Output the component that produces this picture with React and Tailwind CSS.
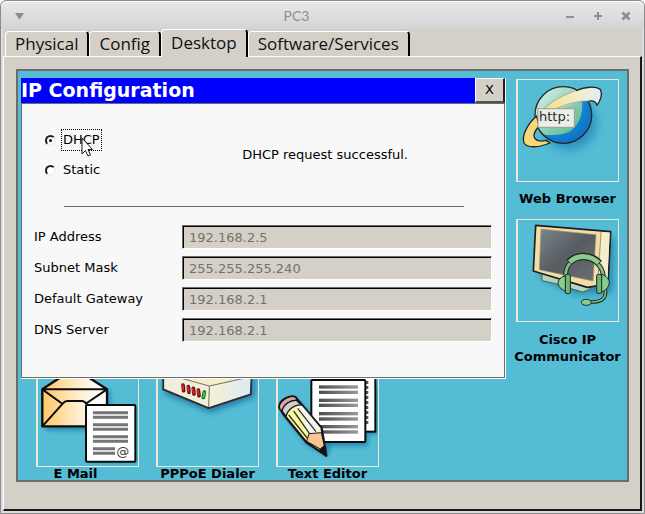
import React, { useState } from 'react';

const tabs = ['Physical', 'Config', 'Desktop', 'Software/Services'];

const GlobeIcon = () => (
  <svg viewBox="54 30 300 303" className="block w-full" aria-hidden="true">
    <defs>
      <radialGradient id="sea" cx="0.3" cy="0.25" r="0.9">
        <stop offset="0.4" stopColor="#1593dc" />
        <stop offset="1" stopColor="#0a6cc0" />
      </radialGradient>
      <linearGradient id="land" x1="0" y1="0" x2="1" y2="1">
        <stop offset="0" stopColor="#e6f4f2" />
        <stop offset="0.6" stopColor="#86ccb0" />
        <stop offset="1" stopColor="#55b48c" />
      </linearGradient>
      <linearGradient id="ribbon" x1="0" y1="0" x2="1" y2="0">
        <stop offset="0" stopColor="#f6dd80" />
        <stop offset="0.6" stopColor="#f2ecc9" />
        <stop offset="1" stopColor="#dff0f6" />
      </linearGradient>
      <filter id="soft" x="-30%" y="-30%" width="160%" height="160%">
        <feGaussianBlur stdDeviation="12" />
      </filter>
    </defs>
    <circle cx="208" cy="158" r="82" fill="#1878b0" opacity="0.6" filter="url(#soft)" />
    <circle cx="190" cy="135" r="85" fill="url(#sea)" />
    <path d="M107 152C96 88 143 50 190 50C214 50 232 58 241 72C254 110 246 158 213 182C190 196 160 196 134 194C120 186 110 170 107 152Z" fill="url(#land)" />
    <circle cx="190" cy="135" r="85" fill="none" stroke="#262626" strokeWidth="4" />
    <path d="M132 122C152 96 190 72 228 60C256 50 286 48 301 58C308 70 303 90 291 106C289 96 282 92 270 92C236 92 186 106 148 132L120 150Z" fill="url(#ribbon)" />
    <path d="M132 116C154 94 190 74 228 62" fill="none" stroke="#8d8d86" strokeWidth="2" />
    <path d="M228 62C256 50 286 48 301 58C308 70 303 90 291 106C289 96 282 92 268 93" fill="none" stroke="#262626" strokeWidth="4" strokeLinejoin="round" />
    <path d="M268 93C236 92 196 102 164 118" fill="none" stroke="#8d8d86" strokeWidth="2" />
    <path d="M110 138C84 160 64 196 72 219C82 236 118 232 150 219L138 211C118 217 102 210 102 196C103 184 110 176 117 168Z" fill="#f5d978" stroke="#262626" strokeWidth="4" strokeLinejoin="round" />
    <rect x="114" y="116" width="109" height="56" fill="#e9eee6" stroke="#9a9c98" strokeWidth="3" />
    <text x="117" y="154" fontSize="39" fontWeight="400" fill="#2c2c2c" fontFamily="'DejaVu Sans', sans-serif">http:</text>
  </svg>
);

const HeadsetIcon = () => (
  <svg viewBox="54 30 300 303" className="block w-full" aria-hidden="true">
    <defs>
      <linearGradient id="screen" x1="0" y1="0" x2="1" y2="1">
        <stop offset="0" stopColor="#7d868b" />
        <stop offset="0.5" stopColor="#565c61" />
        <stop offset="1" stopColor="#6b6f73" />
      </linearGradient>
      <filter id="soft2" x="-30%" y="-30%" width="160%" height="160%">
        <feGaussianBlur stdDeviation="9" />
      </filter>
    </defs>
    <path d="M125 70L344 85L338 250L230 255L120 205Z" fill="#126f9f" opacity="0.6" filter="url(#soft2)" />
    <path d="M126 190L126 212L180 224L200 232L248 246L270 238L268 220L190 196Z" fill="#b4d6b8" stroke="#4c5f56" strokeWidth="3" />
    <path d="M107 46L332 65L324 222L262 232L100 183Z" fill="#f2dda4" stroke="#1d1d1d" strokeWidth="5" strokeLinejoin="round" />
    <path d="M305 66L329 68L322 215L296 222Z" fill="#f5edce" />
    <path d="M303 66L293 222" stroke="#a8976c" strokeWidth="3" />
    <path d="M123 57L288 74L279 213L118 179Z" fill="url(#screen)" stroke="#9b9272" strokeWidth="2" />
    <path d="M197 198C196 166 216 144 250 144C286 144 308 172 310 198" fill="none" stroke="#1c2b1e" strokeWidth="14" />
    <path d="M197 198C196 166 216 144 250 144C286 144 308 172 310 198" fill="none" stroke="#7fc084" strokeWidth="8" />
    <path d="M207 156C230 132 274 132 298 160" fill="none" stroke="#1c2b1e" strokeWidth="21" />
    <path d="M209 156C232 134 272 134 296 159" fill="none" stroke="#8ccb90" strokeWidth="15" />
    <path d="M316 236C320 268 304 277 268 276" fill="none" stroke="#1c2b1e" strokeWidth="11" />
    <path d="M316 236C320 268 304 277 268 276" fill="none" stroke="#7fc084" strokeWidth="5" />
    <ellipse cx="259" cy="277" rx="15" ry="9" fill="#8ccb90" stroke="#1c2b1e" strokeWidth="3" />
    <path d="M198 197C182 200 174 210 174 220C176 234 188 240 198 244Z" fill="#8ccb90" stroke="#1c2b1e" strokeWidth="3" />
    <rect x="196" y="193" width="15" height="58" rx="5" fill="#6eb577" stroke="#1c2b1e" strokeWidth="3" />
    <path d="M305 193C320 198 328 208 328 219C326 232 316 242 303 247Z" fill="#8ccb90" stroke="#1c2b1e" strokeWidth="3" />
    <rect x="290" y="193" width="15" height="57" rx="5" fill="#6eb577" stroke="#1c2b1e" strokeWidth="3" />
  </svg>
);

const MailIcon = () => (
  <svg viewBox="84 0 300 303" className="block w-full" aria-hidden="true">
    <defs>
      <linearGradient id="paper" x1="0" y1="0" x2="1" y2="0">
        <stop offset="0.05" stopColor="#ffcb70" />
        <stop offset="0.6" stopColor="#fff0d6" />
        <stop offset="0.9" stopColor="#ffffff" />
      </linearGradient>
      <filter id="soft3" x="-30%" y="-30%" width="160%" height="160%">
        <feGaussianBlur stdDeviation="7" />
      </filter>
    </defs>
    <path d="M108 76L300 76L300 130L378 130L378 292L240 292L236 196L108 196Z" fill="#126f9f" opacity="0.7" filter="url(#soft3)" />
    <path d="M97 73L193 10L291 73L291 184L97 184Z" fill="url(#paper)" stroke="#0c0c0c" strokeWidth="7" strokeLinejoin="round" />
    <path d="M97 73H291M97 73L158 117M291 73L226 117M97 184L158 116Q164 108 172 108H218Q226 110 232 120" fill="none" stroke="#0c0c0c" strokeWidth="6" />
    <rect x="228" y="120" width="148" height="170" rx="3" fill="#ffffff" stroke="#0c0c0c" strokeWidth="6" />
    <path d="M249 143H354M249 157H354M249 179H354M249 193H354M249 215H354M249 229H354M249 251H315M249 265H315" stroke="#747474" strokeWidth="9" />
    <text x="319" y="272" fontSize="39" fontWeight="400" fill="#3a3a3a" fontFamily="'DejaVu Sans', sans-serif">@</text>
  </svg>
);

const ModemIcon = () => (
  <svg viewBox="54 0 300 303" className="block w-full" aria-hidden="true">
    <defs>
      <linearGradient id="side" x1="0" y1="0" x2="1" y2="0">
        <stop offset="0" stopColor="#f6f1d4" />
        <stop offset="1" stopColor="#dcecf2" />
      </linearGradient>
      <filter id="soft4" x="-30%" y="-30%" width="160%" height="160%">
        <feGaussianBlur stdDeviation="9" />
      </filter>
    </defs>
    <path d="M74 40L344 40L340 96L212 140L74 84Z" fill="#0c5f96" opacity="0.8" filter="url(#soft4)" />
    <path d="M70 22L200 2L335 22L332 88L206 129L70 73Z" fill="#f4edc8" stroke="#3a3a3a" strokeWidth="5" />
    <path d="M70 25L208 63L206 128L70 72Z" fill="#f1eedb" />
    <path d="M208 63L334 35L331 87L206 128Z" fill="url(#side)" />
    <path d="M70 25L208 63L334 35M208 63L206 128" fill="none" stroke="#6e6e6a" strokeWidth="3" />
    <path d="M70 22V73L206 129L332 88L335 22" fill="none" stroke="#303030" strokeWidth="5" />
    <path d="M129 60L131 77M145 65L147 82M160 70L162 87M175 75L177 92" stroke="#4e1515" strokeWidth="11" strokeLinecap="round" />
    <path d="M128 61L130 75M144 66L146 80M159 71L161 85M174 76L176 90" stroke="#e22222" strokeWidth="6" strokeLinecap="round" />
    <path d="M193 81L190 97" stroke="#174d18" strokeWidth="11" strokeLinecap="round" />
    <path d="M193 82L190 96" stroke="#30c637" strokeWidth="7" strokeLinecap="round" />
  </svg>
);

const EditorIcon = () => (
  <svg viewBox="54 0 300 303" className="block w-full" aria-hidden="true">
    <defs>
      <linearGradient id="line" x1="0" y1="0" x2="1" y2="0">
        <stop offset="0" stopColor="#4e4e4e" />
        <stop offset="1" stopColor="#9a9a9a" />
      </linearGradient>
      <filter id="soft5" x="-30%" y="-30%" width="160%" height="160%">
        <feGaussianBlur stdDeviation="7" />
      </filter>
    </defs>
    <path d="M168 60H350V208H324V242H212L202 274L140 240L74 150L120 110L168 170Z" fill="#126f9f" opacity="0.7" filter="url(#soft5)" />
    <rect x="200" y="20" width="146" height="180" fill="#ffffff" stroke="#0c0c0c" strokeWidth="6" />
    <path d="M321 48V182" stroke="#555555" strokeWidth="8" strokeDasharray="9 6" />
    <rect x="154" y="45" width="162" height="186" rx="3" fill="#ffffff" stroke="#0c0c0c" strokeWidth="6" />
    <g fill="url(#line)">
      <rect x="177" y="61" width="117" height="10" />
      <rect x="177" y="77" width="117" height="10" />
      <rect x="177" y="101" width="117" height="10" />
      <rect x="177" y="116" width="117" height="10" />
      <rect x="177" y="141" width="117" height="10" />
      <rect x="177" y="157" width="117" height="10" />
      <rect x="177" y="180" width="117" height="10" />
      <rect x="177" y="196" width="117" height="10" />
    </g>
    <path d="M58 128C56 108 88 88 106 96L121 114L185 190L199 272L139 232L72 150Z" fill="#fbf8a8" stroke="#171717" strokeWidth="7" strokeLinejoin="round" />
    <path d="M110 128L121 116L182 190L170 204L148 206Z" fill="#f4f5f0" />
    <path d="M60 126C60 110 90 92 105 98L108 104C90 102 68 118 63 136Z" fill="#e0a3a3" />
    <path d="M66 138C70 118 92 104 109 106L124 120C104 118 84 132 78 154Z" fill="#cfcfd2" stroke="#171717" strokeWidth="4" />
    <path d="M86 150L144 222M101 138L148 205M113 130L168 200" fill="none" stroke="#36361f" strokeWidth="4" />
    <path d="M147 206L184 203L193 243L181 252L140 229Z" fill="#f9c592" stroke="#171717" strokeWidth="3" />
    <path d="M193 240L200 275L177 255Z" fill="#111111" />
  </svg>
);

const DesktopApp = ({ icon, children, labelClass }) => (
  <a href="#" className="flex w-[103px] flex-col items-center text-[13px] font-bold text-black">
    <span className="block w-full border border-l-2 border-[#ece9d8]">{icon}</span>
    <span className={`text-center whitespace-nowrap ${labelClass}`}>{children}</span>
  </a>
);

const Field = ({ id, label, value }) => (
  <div className="flex items-center">
    <label htmlFor={id} className="w-[148px] shrink-0">{label}</label>
    <input
      id={id}
      type="text"
      value={value}
      disabled
      className="h-6 min-w-0 flex-1 border border-t-[#6c6c6c] border-r-white border-b-white border-l-[#6c6c6c] bg-[#d4d0c8] px-[6px] text-[#757269] shadow-[inset_1px_1px_0_#000000]"
    />
  </div>
);

const radioClass =
  "relative size-[11px] appearance-none rounded-full border-2 border-t-[#202020] border-r-[#efefef] border-b-[#efefef] border-l-[#202020] bg-white before:absolute before:inset-[2px] before:rounded-full checked:before:bg-black before:content-['']";

const App = () => {
  const [activeTab, setActiveTab] = useState('Desktop');
  const [mode, setMode] = useState('dhcp');

  return (
    <div className="flex min-h-screen flex-col rounded-t-md border border-[#8c8c8c] bg-[#dcdcdc] font-['DejaVu_Sans',sans-serif]">
      <header className="flex h-7 items-center rounded-t-md border-t border-white bg-linear-to-b from-[#e8e8e8] to-[#d4d4d4] pr-1 text-[#8e8e8e]">
        <button aria-label="Window menu" className="flex w-9 justify-center">
          <svg viewBox="0 0 9 6" className="w-[9px]"><path d="M0 0H9L5 6H4Z" fill="#8e8e8e" /></svg>
        </button>
        <h1 className="flex-1 text-center font-['Lato',sans-serif] text-[14px]">PC3</h1>
        <button aria-label="Minimize" className="flex w-7 justify-center">
          <svg viewBox="0 0 10 10" className="w-[10px]"><path d="M1 6H9" stroke="#8e8e8e" strokeWidth="2" /></svg>
        </button>
        <button aria-label="Maximize" className="flex w-7 justify-center">
          <svg viewBox="0 0 10 10" className="w-[10px]"><path d="M1 5H9M5 1V9" stroke="#8e8e8e" strokeWidth="2" /></svg>
        </button>
        <button aria-label="Close" className="flex w-7 justify-center">
          <svg viewBox="0 0 10 10" className="w-[10px]"><path d="M1.500 1.500L8.500 8.500M8.500 1.500L1.500 8.500" stroke="#8e8e8e" strokeWidth="2.600" /></svg>
        </button>
      </header>

      <div className="mx-[2px] mb-[2px] flex flex-1 flex-col bg-[#d4d0c8]">
        <div role="tablist" className="flex items-end pl-[2px] font-['Open_Sans',sans-serif] text-[17px] text-[#111111]">
          {tabs.map((tab) => (
            <button
              key={tab}
              role="tab"
              aria-selected={activeTab === tab}
              onClick={() => setActiveTab(tab)}
              className={
                activeTab === tab
                  ? 'relative -mb-px h-7 rounded-t-sm border-t border-r-2 border-l border-t-white border-r-black border-l-white bg-[#d4d0c8] px-[9px] pb-px leading-6'
                  : 'h-[25px] rounded-t-sm border-t border-r-2 border-l border-t-white border-r-black border-l-white px-[9px] leading-6'
              }
            >
              {tab}
            </button>
          ))}
        </div>

        <div className="flex flex-1 flex-col border-t border-r-2 border-b-2 border-l border-t-white border-r-[#181818] border-b-[#181818] border-l-white pt-3 pr-[11px] pb-[27px] pl-3">
          <main className="relative flex flex-1 justify-between border-2 border-[#6c6c6c] bg-[#54bcd4] pt-2 pr-2 pl-[18px]">
            <div className="flex items-end gap-[17px]">
              <DesktopApp icon={<MailIcon />} labelClass="pr-6 leading-[13px]">E Mail</DesktopApp>
              <DesktopApp icon={<ModemIcon />} labelClass="leading-[13px]">PPPoE Dialer</DesktopApp>
              <DesktopApp icon={<EditorIcon />} labelClass="leading-[13px]">Text Editor</DesktopApp>
            </div>
            <div className="flex flex-col">
              <DesktopApp icon={<GlobeIcon />} labelClass="pt-2 pb-3 leading-[17px]">Web Browser</DesktopApp>
              <DesktopApp icon={<HeadsetIcon />} labelClass="pt-[9px] leading-[17px]">Cisco IP<br />Communicator</DesktopApp>
            </div>

            <section className="absolute top-[7px] right-[121px] left-[3px] border-r border-b border-white bg-[#f8f8f8] text-[13px] text-black">
              <div className="flex h-[25px] bg-[#0000ff]">
                <h2 className="flex-1 text-[19px] leading-6 font-bold text-white">IP Configuration</h2>
                <button
                  aria-label="Close IP Configuration"
                  className="w-[30px] border border-r-2 border-b-2 border-t-white border-r-[#202020] border-b-[#505050] border-l-white bg-[#d4d0c8] leading-5"
                >
                  X
                </button>
              </div>
              <form className="border border-[#6c6c6c] px-3 pt-[25px] pb-[35px]">
                <div className="flex items-center">
                  <div className="flex flex-col gap-2 pl-[11px] leading-[22px]">
                    <div className="flex items-center gap-[5px]">
                      <input id="dhcp" type="radio" name="mode" className={radioClass} checked={mode === 'dhcp'} onChange={() => setMode('dhcp')} />
                      <label htmlFor="dhcp" className="relative border border-dotted border-black px-px leading-5">
                        DHCP
                        <svg viewBox="0 0 12 20" className="absolute top-[7px] left-[19px] h-5 w-3" aria-hidden="true">
                          <path d="M1 1V17L4.500 13.500L7 19L9.500 18L7 12.500H11.500Z" fill="#ffffff" stroke="#1a1a1a" />
                        </svg>
                      </label>
                    </div>
                    <div className="flex items-center gap-[5px]">
                      <input id="static" type="radio" name="mode" className={radioClass} checked={mode === 'static'} onChange={() => setMode('static')} />
                      <label htmlFor="static" className="px-[2px]">Static</label>
                    </div>
                  </div>
                  <p className="flex-1 pl-14 text-center">DHCP request successful.</p>
                </div>
                <hr className="mt-[25px] mr-7 mb-[18px] ml-[30px] border-[#6c6c6c]" />
                <div className="flex flex-col gap-[7px]">
                  <Field id="ip" label="IP Address" value="192.168.2.5" />
                  <Field id="mask" label="Subnet Mask" value="255.255.255.240" />
                  <Field id="gateway" label="Default Gateway" value="192.168.2.1" />
                  <Field id="dns" label="DNS Server" value="192.168.2.1" />
                </div>
              </form>
            </section>
          </main>
        </div>
      </div>
    </div>
  );
};

export default App;
